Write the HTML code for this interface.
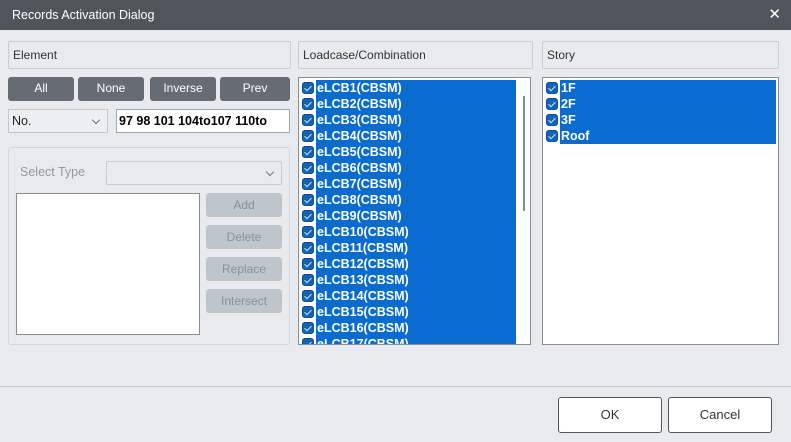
<!DOCTYPE html><html><head><style>
body{margin:0;width:791px;height:442px;background:#e9eaee;font-family:"Liberation Sans",sans-serif;position:relative;overflow:hidden;font-size:12px}
.a{position:absolute;box-sizing:border-box}
.hdr{border:1px solid #c9ccd1;background:#e9eaee;color:#333;padding:6px 4px;border-radius:2px}
.bt{background:#666c74;color:#fff;text-align:center;line-height:23px;border-radius:3px;font-size:12px}
.gb{background:#bfc5cc;color:#8a9098;text-align:center;line-height:24px;border-radius:3px}
.it{position:absolute;left:3px;height:16px;line-height:16px;color:#fff;font-weight:bold;font-size:12.5px;white-space:nowrap}
.cb{display:inline-block;width:12px;height:12px;background:#1464b4;border:1px solid #0b4d8f;border-radius:3px;vertical-align:-2px;margin-right:3px;position:relative;box-sizing:border-box}
.cb:after{content:"";position:absolute;left:3px;top:1px;width:3px;height:6px;border:solid #cfe0f2;border-width:0 1.3px 1.3px 0;transform:rotate(45deg)}
.chev{position:absolute;right:8px;top:7px;width:5px;height:5px;border:solid #777;border-width:0 1.5px 1.5px 0;transform:rotate(45deg)}
</style></head><body>
<div class="a" style="left:0;top:0;width:791px;height:30px;background:#50555c;color:#fff;font-size:12.5px;padding:8px 12px">Records Activation Dialog<span style="position:absolute;right:10px;top:5px;font-size:15px">✕</span></div>
<div class="a hdr" style="left:8px;top:41px;width:283px;height:28px">Element</div>
<div class="a bt" style="left:8px;top:77px;width:66px;height:24px">All</div>
<div class="a bt" style="left:78px;top:77px;width:66px;height:24px">None</div>
<div class="a bt" style="left:150px;top:77px;width:66px;height:24px">Inverse</div>
<div class="a bt" style="left:220px;top:77px;width:70px;height:24px">Prev</div>
<div class="a" style="left:8px;top:109px;width:100px;height:24px;border:1px solid #c3c7cd;background:#eceef1;padding:4px 3px;font-size:12.5px;color:#222">No.<span class="chev"></span></div>
<div class="a" style="left:116px;top:109px;width:174px;height:24px;border:1px solid #9ab;background:#fff;padding:4px 2px;font-weight:bold;font-size:12.5px;white-space:nowrap;overflow:hidden">97 98 101 104to107 110to</div>
<div class="a" style="left:8px;top:147px;width:282px;height:198px;border:1px solid #d3d6da;border-radius:3px"></div>
<div class="a" style="left:20px;top:165px;color:#999;font-size:12.5px">Select Type</div>
<div class="a" style="left:106px;top:161px;width:176px;height:24px;border:1px solid #c9ccd1;border-radius:2px"><span class="chev"></span></div>
<div class="a" style="left:16px;top:193px;width:184px;height:142px;background:#fff;border:1px solid #8a8e96"></div>
<div class="a gb" style="left:206px;top:193px;width:76px;height:24px">Add</div>
<div class="a gb" style="left:206px;top:225px;width:76px;height:24px">Delete</div>
<div class="a gb" style="left:206px;top:257px;width:76px;height:24px">Replace</div>
<div class="a gb" style="left:206px;top:289px;width:76px;height:24px">Intersect</div>
<div class="a hdr" style="left:298px;top:41px;width:235px;height:28px">Loadcase/Combination</div>
<div class="a" style="left:298px;top:77px;width:233px;height:268px;background:#fff;border:1px solid #8a8e96;overflow:hidden">
<div class="a" style="left:17px;top:2px;width:200px;height:270px;background:#0a6cd0"></div>
<div class="a" style="left:224px;top:18px;width:2px;height:115px;background:#888"></div>
<div class="it" style="top:2px"><span class="cb"></span>eLCB1(CBSM)</div>
<div class="it" style="top:18px"><span class="cb"></span>eLCB2(CBSM)</div>
<div class="it" style="top:34px"><span class="cb"></span>eLCB3(CBSM)</div>
<div class="it" style="top:50px"><span class="cb"></span>eLCB4(CBSM)</div>
<div class="it" style="top:66px"><span class="cb"></span>eLCB5(CBSM)</div>
<div class="it" style="top:82px"><span class="cb"></span>eLCB6(CBSM)</div>
<div class="it" style="top:98px"><span class="cb"></span>eLCB7(CBSM)</div>
<div class="it" style="top:114px"><span class="cb"></span>eLCB8(CBSM)</div>
<div class="it" style="top:130px"><span class="cb"></span>eLCB9(CBSM)</div>
<div class="it" style="top:146px"><span class="cb"></span>eLCB10(CBSM)</div>
<div class="it" style="top:162px"><span class="cb"></span>eLCB11(CBSM)</div>
<div class="it" style="top:178px"><span class="cb"></span>eLCB12(CBSM)</div>
<div class="it" style="top:194px"><span class="cb"></span>eLCB13(CBSM)</div>
<div class="it" style="top:210px"><span class="cb"></span>eLCB14(CBSM)</div>
<div class="it" style="top:226px"><span class="cb"></span>eLCB15(CBSM)</div>
<div class="it" style="top:242px"><span class="cb"></span>eLCB16(CBSM)</div>
<div class="it" style="top:258px"><span class="cb"></span>eLCB17(CBSM)</div>
</div>
<div class="a hdr" style="left:542px;top:41px;width:237px;height:28px">Story</div>
<div class="a" style="left:542px;top:77px;width:237px;height:268px;background:#fff;border:1px solid #8a8e96;overflow:hidden">
<div class="a" style="left:17px;top:2px;width:216px;height:64px;background:#0a6cd0"></div>
<div class="it" style="top:2px"><span class="cb"></span>1F</div>
<div class="it" style="top:18px"><span class="cb"></span>2F</div>
<div class="it" style="top:34px"><span class="cb"></span>3F</div>
<div class="it" style="top:50px"><span class="cb"></span>Roof</div>
</div>
<div class="a" style="left:0;top:386px;width:791px;height:1px;background:#c3c6cb"></div>
<div class="a" style="left:558px;top:397px;width:104px;height:36px;background:#fff;border:1px solid #555;border-radius:3px;text-align:center;line-height:34px;font-size:13px;color:#333">OK</div>
<div class="a" style="left:668px;top:397px;width:104px;height:36px;background:#fff;border:1px solid #555;border-radius:3px;text-align:center;line-height:34px;font-size:13px;color:#333">Cancel</div>
</body></html>
